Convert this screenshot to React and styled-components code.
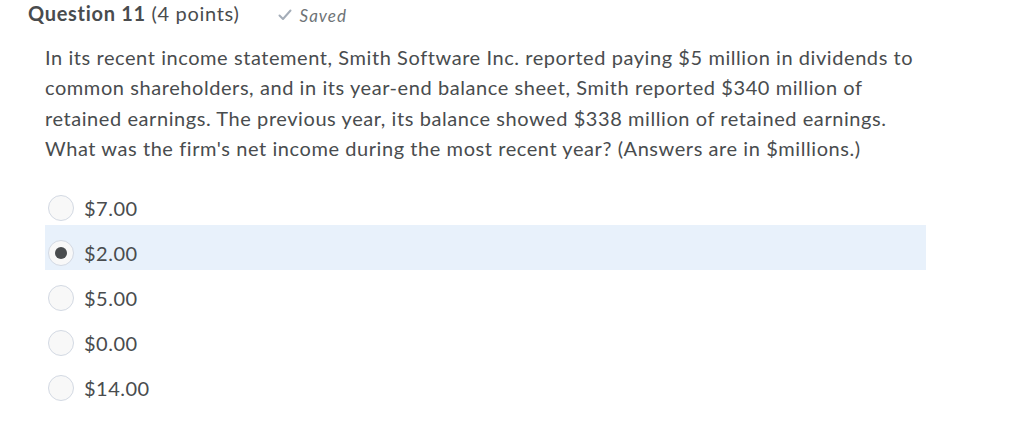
import React from 'react';
import styled, { createGlobalStyle } from 'styled-components';

const GlobalStyle = createGlobalStyle`
  html, body {
    margin: 0;
    padding: 0;
    background: #ffffff;
  }
  body {
    font-family: Lato, "Noto Sans", sans-serif;
    color: #494c4e;
  }
`;

const Page = styled.div`
  width: 1024px;
  height: 430px;
  box-sizing: border-box;
  padding: 0 0 0 28px;
`;

const Header = styled.div`
  display: flex;
  align-items: baseline;
  height: 27px;
`;

const Title = styled.h2`
  margin: 0;
  font-size: 20px;
  font-weight: 700;
  line-height: 27px;
  letter-spacing: 0.7px;
  color: #494c4e;
`;

const Points = styled.span`
  font-weight: 400;
`;

const SavedTag = styled.span`
  display: flex;
  align-items: center;
  gap: 8px;
  margin-left: 38px;
  font-size: 17px;
  font-style: italic;
  letter-spacing: 1px;
  color: #6e7376;
`;

const Body = styled.div`
  padding-left: 17px;
`;

const Prompt = styled.p`
  margin: 15px 0 0;
  font-size: 20px;
  line-height: 30.3px;
  width: 950px;
  letter-spacing: 0.57px;
`;

const Options = styled.div`
  display: flex;
  flex-direction: column;
  margin-top: 17px;
  width: 881px;
`;

const Row = styled.label`
  display: flex;
  align-items: center;
  gap: 10px;
  height: 45px;
  box-sizing: border-box;
  padding: 15px 0 4px 3px;
  background: ${p => (p.$selected ? '#e8f1fb' : 'transparent')};
  font-size: 20px;
  letter-spacing: 0.5px;
`;

const Radio = styled.span`
  width: 26px;
  height: 26px;
  box-sizing: border-box;
  border-radius: 50%;
  border: 1px solid #d3d9e3;
  background: #f8f8f8;
  display: flex;
  align-items: center;
  justify-content: center;
  flex-shrink: 0;
`;

const Dot = styled.span`
  width: 12px;
  height: 12px;
  border-radius: 50%;
  background: #494c4e;
`;

const Check = () => (
  <svg width="14" height="12" viewBox="0 0 14 12">
    <path d="M1.5 6.5 L5 10 L12.5 1.5" fill="none" stroke="#a4adb8" strokeWidth="2" strokeLinecap="round" strokeLinejoin="round" />
  </svg>
);

const answers = ['$7.00', '$2.00', '$5.00', '$0.00', '$14.00'];
const selected = 1;

export default function App() {
  return (
    <Page>
      <GlobalStyle />
      <Header>
        <Title>
          Question 11 <Points>(4 points)</Points>
        </Title>
        <SavedTag>
          <Check />
          Saved
        </SavedTag>
      </Header>
      <Body>
        <Prompt>
          In its recent income statement, Smith Software Inc. reported paying $5 million in dividends to
          <br />
          common shareholders, and in its year-end balance sheet, Smith reported $340 million of
          <br />
          retained earnings. The previous year, its balance showed $338 million of retained earnings.
          <br />
          What was the firm's net income during the most recent year? (Answers are in $millions.)
        </Prompt>
        <Options>
          {answers.map((a, i) => (
            <Row key={a} $selected={i === selected}>
              <Radio>{i === selected && <Dot />}</Radio>
              {a}
            </Row>
          ))}
        </Options>
      </Body>
    </Page>
  );
}
